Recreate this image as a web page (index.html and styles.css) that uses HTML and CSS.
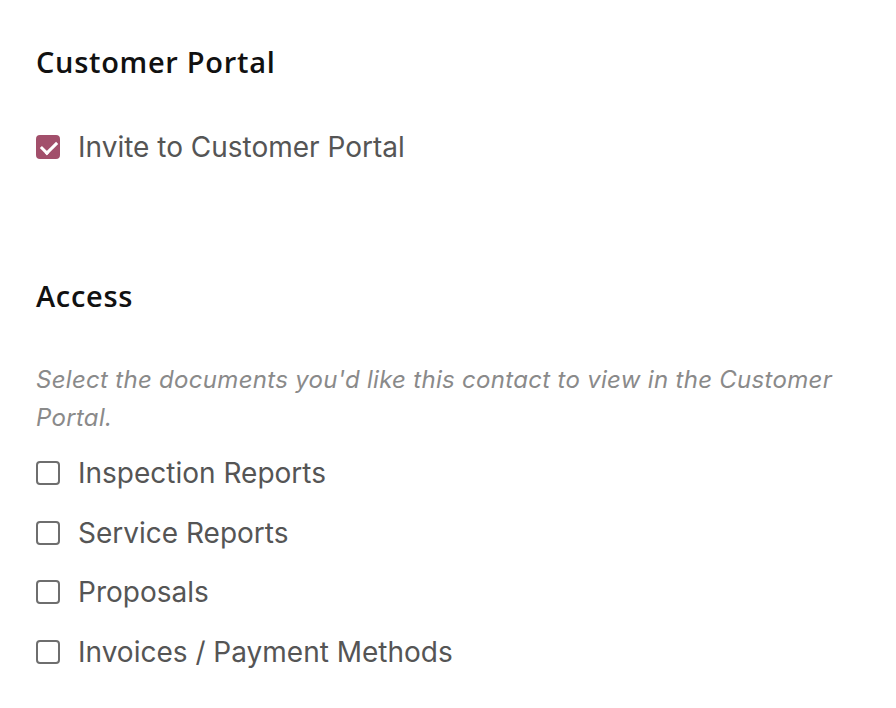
FILE: index.html
```html
<!DOCTYPE html>
<html lang="en">
<head>
    <meta charset="UTF-8">
    <meta name="viewport" content="width=device-width, initial-scale=1.0">
    <title>Customer Portal</title>
    <link rel="stylesheet" href="styles.css">
</head>
<body>

<div class="panel">
    <!-- Portal invite -->
    <section class="section">
        <h2 class="section-title">Customer Portal</h2>
        <label class="check-row">
            <input type="checkbox" class="check" checked>
            <span class="check-label">Invite to Customer Portal</span>
        </label>
    </section>

    <!-- Document access -->
    <section class="section access">
        <h2 class="section-title">Access</h2>
        <p class="hint">Select the documents you'd like this contact to view in the Customer Portal.</p>
        <div class="check-list">
            <label class="check-row">
                <input type="checkbox" class="check">
                <span class="check-label">Inspection Reports</span>
            </label>
            <label class="check-row">
                <input type="checkbox" class="check">
                <span class="check-label">Service Reports</span>
            </label>
            <label class="check-row">
                <input type="checkbox" class="check">
                <span class="check-label">Proposals</span>
            </label>
            <label class="check-row">
                <input type="checkbox" class="check">
                <span class="check-label">Invoices / Payment Methods</span>
            </label>
        </div>
    </section>
</div>

</body>
</html>
```

FILE: styles.css
```css
/* Global */
body {
    margin: 0;
    padding: 0;
    background-color: #ffffff;
    font-family: 'Inter', 'Liberation Sans', sans-serif;
    color: #555555;
}

.panel {
    padding: 44px 36px 0 36px;
    width: 824px;
}

.section-title {
    font-family: 'Open Sans', 'Inter', sans-serif;
    font-size: 29px;
    font-weight: 600;
    letter-spacing: 0.7px;
    color: #111111;
    margin: 0 0 48px 0;
    line-height: 36px;
}

.access {
    margin-top: 112px;
}

.access .section-title {
    margin-bottom: 47px;
}

/* Hint text */
.hint {
    font-size: 24px;
    font-style: italic;
    letter-spacing: 0.3px;
    color: #8a8a8a;
    line-height: 38px;
    margin: 0 0 17px 0;
}

.check-list {
    display: flex;
    flex-direction: column;
    gap: 21.5px;
}

/* Checkbox rows */
.check-row {
    display: flex;
    align-items: center;
    gap: 18px;
    cursor: pointer;
}

.check {
    appearance: none;
    -webkit-appearance: none;
    width: 24px;
    height: 24px;
    margin: 0;
    border: 2px solid #6e6e6e;
    border-radius: 4px;
    background-color: #ffffff;
    flex-shrink: 0;
    position: relative;
}

.check:checked {
    background-color: #a24f6b;
    border-color: #a24f6b;
}

.check:checked::after {
    content: '';
    position: absolute;
    left: 6px;
    top: 1px;
    width: 7px;
    height: 13px;
    border: solid #ffffff;
    border-width: 0 3.5px 3.5px 0;
    transform: rotate(45deg);
}

.check-label {
    font-size: 28px;
    line-height: 38px;
    color: #555555;
}
```
